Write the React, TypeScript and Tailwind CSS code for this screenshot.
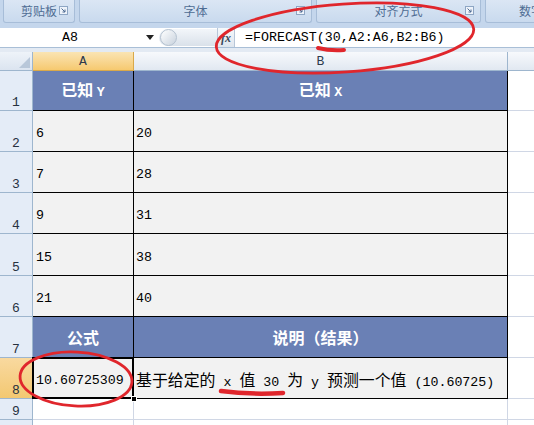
import React from "react";

const MONO = "font-['Liberation_Mono','Noto_Sans_CJK_SC',monospace]";
const CJK = "font-['Noto_Sans_CJK_SC','Noto_Sans',sans-serif]";

function Launcher() {
  return (
    <svg width="9" height="9" viewBox="0 0 9 9" className="shrink-0">
      <rect x="0.5" y="0.5" width="8" height="8" fill="#eef3fa" stroke="#8ea6c4" />
      <path d="M2.5 2.5 L6 6 M6 3.5 V6 H3.5" stroke="#4d6b92" strokeWidth="1" fill="none" />
    </svg>
  );
}

function RibbonGroup({ label, width, launcher = true }: { label: string; width: string; launcher?: boolean }) {
  return (
    <div
      className={`relative flex h-[23px] ${width} shrink-0 items-center justify-center rounded-b-[3px] border border-t-0 border-[#a7bdd8] bg-gradient-to-b from-[#dbe6f4] to-[#c9daee]`}
    >
      <span className={`${CJK} text-[12px] leading-none text-[#4e6c93]`}>{label}</span>
      {launcher && (
        <span className="absolute right-[6px] top-[6px]">
          <Launcher />
        </span>
      )}
    </div>
  );
}

type RowProps = {
  num?: number;
  a?: React.ReactNode;
  b?: React.ReactNode;
  height: string;
  header?: boolean;
  selected?: boolean;
  plain?: boolean;
};

function Row({ num, a, b, height, header, selected, plain }: RowProps) {
  const cellBase = plain
    ? "bg-white border-b border-r border-[#d0d7e5]"
    : header
    ? "bg-[#6a80b5] border-b border-r border-black"
    : "bg-[#f2f2f2] border-b border-r border-black";
  return (
    <div className={`flex ${height} shrink-0`}>
      <div
        className={`flex w-[33px] shrink-0 items-end justify-center border-b border-r border-[#9eb6ce] pb-[1px] ${MONO} text-[13px] leading-none text-[#27313f] ${
          selected ? "bg-gradient-to-b from-[#f9d99f] to-[#f3c871]" : "bg-[#e4ecf7]"
        }`}
      >
        {num}
      </div>
      <div
        className={`relative flex w-[101px] shrink-0 items-center ${cellBase} ${
          header ? "justify-center" : "pl-[3px] pt-[6px]"
        }`}
      >
        {selected && <div className="pointer-events-none absolute inset-[-1px] border-2 border-black" />}
        {selected && <div className="absolute bottom-[-4px] right-[-4px] z-10 h-[6px] w-[6px] border border-white bg-black" />}
        {a}
      </div>
      <div
        className={`flex w-[374px] shrink-0 items-center ${cellBase} ${header ? "justify-center" : "pl-[2px] pt-[6px]"}`}
      >
        {b}
      </div>
      <div className="flex-1 border-b border-[#d0d7e5] bg-white" />
    </div>
  );
}

function Num({ children }: { children: React.ReactNode }) {
  return <span className={`${MONO} text-[13.3px] leading-none text-black`}>{children}</span>;
}

function HeadText({ children }: { children: React.ReactNode }) {
  return <span className={`${CJK} text-[16px] font-bold leading-none text-white`}>{children}</span>;
}

export default function App() {
  const data: [string, string][] = [
    ["6", "20"],
    ["7", "28"],
    ["9", "31"],
    ["15", "38"],
    ["21", "40"],
  ];

  return (
    <div className="relative h-[425px] w-[534px] overflow-hidden bg-white">
      {/* ribbon group labels */}
      <div className="flex h-[28px] items-start gap-[4px] bg-[#c4d6ec] pl-[3px]">
        <RibbonGroup label="剪贴板" width="w-[72px]" />
        <RibbonGroup label="字体" width="w-[233px]" />
        <RibbonGroup label="对齐方式" width="w-[165px]" />
        <RibbonGroup label="数字" width="w-[92px]" launcher={false} />
      </div>

      {/* formula bar */}
      <div className="flex h-[20px] border-b border-[#a9bfd7] bg-white">
        <div className={`flex w-[140px] items-center justify-center ${MONO} text-[13.3px] leading-none text-black`}>A8</div>
        <div className="flex w-[19px] items-center justify-center">
          <svg width="8" height="5" viewBox="0 0 8 5">
            <path d="M0 0 H8 L4 5 Z" fill="#222" />
          </svg>
        </div>
        <div className="my-[1px] flex w-[58px] items-center rounded-l-full bg-gradient-to-b from-[#f3f6fa] to-[#d9e1ea]">
          <div className="ml-[1px] h-[17px] w-[17px] rounded-full border border-[#b5c2d0] bg-gradient-to-br from-white to-[#c9d3de]" />
        </div>
        <div className="flex w-[18px] items-center justify-center border-x border-[#b7c6d8] bg-gradient-to-b from-[#f5f8fb] to-[#dfe6ee]">
          <span className="font-['Liberation_Serif',serif] text-[12px] font-bold italic leading-none text-[#3c4a5c]">fx</span>
        </div>
        <div className={`flex flex-1 items-center pl-[10px] ${MONO} text-[13.3px] leading-none text-black`}>
          =FORECAST(30,A2:A6,B2:B6)
        </div>
      </div>

      <div className="h-[4px] bg-[#e3eaf3]" />

      {/* column headers */}
      <div className={`flex h-[19px] ${MONO} text-[13px] leading-none`}>
        <div className="relative w-[33px] border-b border-r border-[#9eb6ce] bg-gradient-to-b from-[#eef3f9] to-[#dbe4f0]">
          <svg className="absolute bottom-[2px] right-[2px]" width="11" height="11" viewBox="0 0 11 11">
            <path d="M11 0 V11 H0 Z" fill="#b8c7d9" />
          </svg>
        </div>
        <div className="flex w-[101px] items-end justify-center border-b border-r border-[#d9a94a] bg-gradient-to-b from-[#fae4b3] to-[#f6c96f] pb-[2px] text-[#2d3a4c]">
          A
        </div>
        <div className="flex w-[374px] items-end justify-center border-b border-r border-[#9eb6ce] bg-gradient-to-b from-[#f7f9fc] to-[#e1e8f1] pb-[2px] text-[#2d3a4c]">
          B
        </div>
        <div className="flex-1 border-b border-[#9eb6ce] bg-gradient-to-b from-[#f7f9fc] to-[#e1e8f1]" />
      </div>

      {/* rows */}
      <div className="flex flex-col">
        <Row
          num={1}
          height="h-[40px]"
          header
          a={
            <HeadText>
              已知 <span className={`${MONO} text-[13.3px]`}>Y</span>
            </HeadText>
          }
          b={
            <HeadText>
              已知 <span className={`${MONO} text-[13.3px]`}>X</span>
            </HeadText>
          }
        />
        {data.map(([a, b], i) => (
          <Row key={i} num={i + 2} height={i === 3 ? "h-[42px]" : "h-[41px]"} a={<Num>{a}</Num>} b={<Num>{b}</Num>} />
        ))}
        <Row num={7} height="h-[41px]" header a={<HeadText>公式</HeadText>} b={<HeadText>说明（结果）</HeadText>} />
        <Row
          num={8}
          height="h-[41px]"
          selected
          a={<Num>10.60725309</Num>}
          b={
            <span className="whitespace-pre leading-none text-black">
              <span className={`${CJK} text-[15.9px]`}>基于给定的</span>
              <span className={`${MONO} text-[13.3px]`}> x </span>
              <span className={`${CJK} text-[15.9px]`}>值</span>
              <span className={`${MONO} text-[13.3px]`}> 30 </span>
              <span className={`${CJK} text-[15.9px]`}>为</span>
              <span className={`${MONO} text-[13.3px]`}> y </span>
              <span className={`${CJK} text-[15.9px]`}>预测一个值</span>
              <span className={`${MONO} text-[13.3px]`}> (10.60725)</span>
            </span>
          }
        />
        <Row num={9} height="h-[21px]" plain />
        <Row height="h-[21px]" plain />
      </div>

      {/* red pen annotations */}
      <svg className="pointer-events-none absolute inset-0" width="534" height="425" viewBox="0 0 534 425">
        <ellipse cx="345" cy="38" rx="129" ry="34" transform="rotate(-4 345 38)" fill="none" stroke="#e0262c" strokeWidth="2.8" />
        <path d="M318 48 Q330 51 344 50" fill="none" stroke="#e0262c" strokeWidth="4" strokeLinecap="round" />
        <ellipse cx="76" cy="379" rx="56" ry="27" transform="rotate(3 76 379)" fill="none" stroke="#e0262c" strokeWidth="2.8" />
        <path d="M221 391 Q250 395 283 393" fill="none" stroke="#e0262c" strokeWidth="4.5" strokeLinecap="round" />
      </svg>
    </div>
  );
}
